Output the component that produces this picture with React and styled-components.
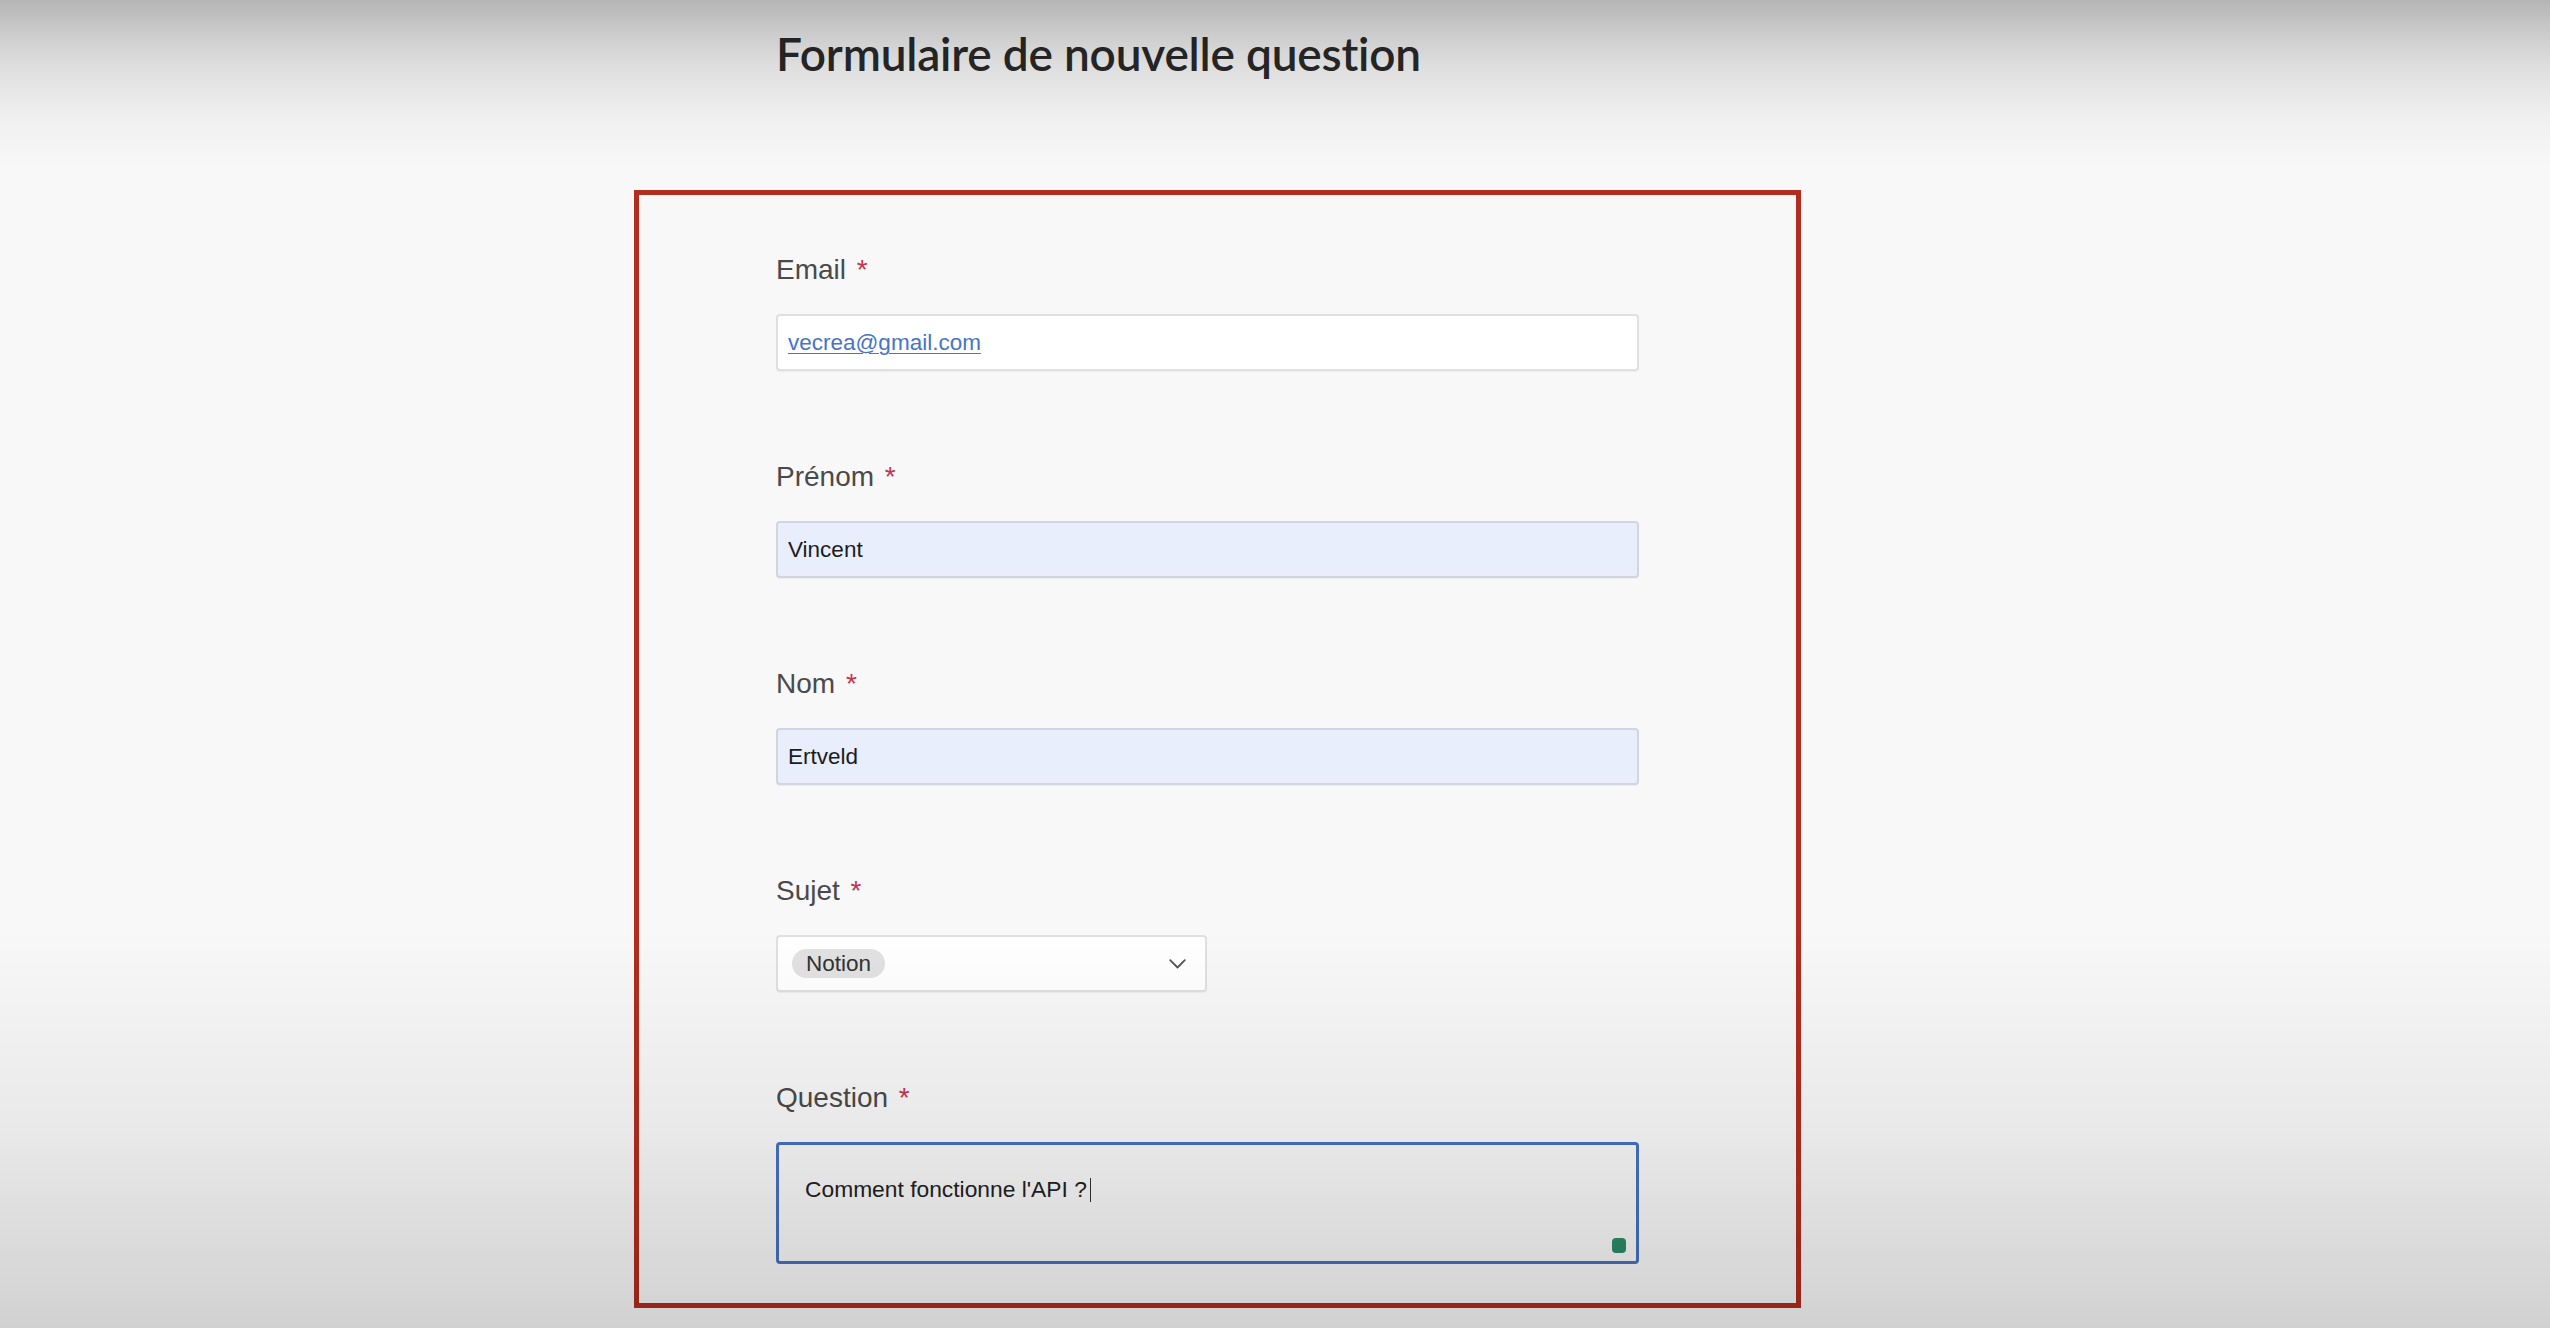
import React from "react";
import styled, { createGlobalStyle } from "styled-components";

const GlobalStyle = createGlobalStyle`
  html, body {
    margin: 0;
    padding: 0;
    background: #f8f8f8;
  }
  body {
    min-height: 100vh;
    font-family: "Liberation Sans", Arial, sans-serif;
  }
`;

const Page = styled.div`
  min-height: 100vh;
  display: flex;
  flex-direction: column;
  padding: 26px 0 0 634px;
  box-sizing: border-box;
`;

const Column = styled.div`
  width: 1167px;
  display: flex;
  flex-direction: column;
`;

const Title = styled.h1`
  margin: 0 0 108px 142px;
  font-family: "Lato", "Liberation Sans", sans-serif;
  font-weight: 600;
  font-size: 46px;
  line-height: 56px;
  color: #2a2a2a;
  letter-spacing: -0.2px;
`;

const FormBox = styled.form`
  border: 5px solid #b22d1d;
  padding: 59px 0 39px 137px;
  display: flex;
  flex-direction: column;
  gap: 90px;
  background: #f8f8f8;
`;

const Field = styled.div`
  display: flex;
  flex-direction: column;
  gap: 28px;
`;

const Label = styled.label`
  font-size: 28px;
  line-height: 32px;
  color: #4a4a4a;
`;

const Required = styled.span`
  color: #c53350;
  margin-left: 3px;
`;

const Box = styled.div`
  box-sizing: border-box;
  width: ${(p) => p.$width || 863}px;
  height: 57px;
  display: flex;
  align-items: center;
  padding: 0 10px;
  border: 2px solid ${(p) => (p.$autofill ? "#d2d5de" : "#e0e0e0")};
  border-radius: 4px;
  background: ${(p) => (p.$autofill ? "#e8eefb" : "#ffffff")};
  box-shadow: 0 1px 1px rgba(0, 0, 0, 0.05);
  font-size: 22.5px;
  color: #1c1c1c;
`;

const EmailLink = styled.span`
  color: #4874c6;
  text-decoration: underline;
  text-decoration-thickness: 1px;
  text-underline-offset: 3px;
`;

const SelectBox = styled(Box)`
  padding: 0 19px 0 14px;
  justify-content: space-between;
`;

const Pill = styled.span`
  display: inline-flex;
  align-items: center;
  height: 29px;
  padding: 0 14px;
  border-radius: 15px;
  background: #e2e2e2;
  color: #333;
  font-size: 22.5px;
`;

const TextArea = styled.div`
  position: relative;
  box-sizing: border-box;
  width: 863px;
  height: 122px;
  border: 3px solid #4572c2;
  border-radius: 4px;
  padding: 31px 26px;
  font-size: 22.8px;
  line-height: 26px;
  color: #222;
  background: transparent;
`;

const Caret = styled.span`
  display: inline-block;
  width: 1.5px;
  height: 24px;
  margin-left: 3px;
  vertical-align: -5px;
  background: #333;
`;

const GrammarDot = styled.span`
  position: absolute;
  right: 10px;
  bottom: 8px;
  width: 14px;
  height: 15px;
  border-radius: 4px;
  background: #2c8a66;
`;

const Vignette = styled.div`
  position: fixed;
  inset: 0;
  pointer-events: none;
  background: linear-gradient(
    to bottom,
    rgba(0, 0, 0, 0.27) 0px,
    rgba(0, 0, 0, 0.2) 25px,
    rgba(0, 0, 0, 0.1) 65px,
    rgba(0, 0, 0, 0.03) 120px,
    rgba(0, 0, 0, 0) 170px,
    rgba(0, 0, 0, 0) 930px,
    rgba(0, 0, 0, 0.06) 1130px,
    rgba(0, 0, 0, 0.155) 1328px
  );
`;

const Chevron = () => (
  <svg width="17" height="10" viewBox="0 0 17 10" fill="none">
    <path d="M1.2 1.2 L8.5 8.5 L15.8 1.2" stroke="#555" strokeWidth="1.8" strokeLinecap="round" strokeLinejoin="round" />
  </svg>
);

const LabelText = ({ children }) => (
  <Label>
    {children} <Required>*</Required>
  </Label>
);

export default function App() {
  return (
    <>
      <GlobalStyle />
      <Page>
        <Column>
          <Title>Formulaire de nouvelle question</Title>
          <FormBox>
            <Field>
              <LabelText>Email</LabelText>
              <Box>
                <EmailLink>vecrea@gmail.com</EmailLink>
              </Box>
            </Field>
            <Field>
              <LabelText>Prénom</LabelText>
              <Box $autofill>Vincent</Box>
            </Field>
            <Field>
              <LabelText>Nom</LabelText>
              <Box $autofill>Ertveld</Box>
            </Field>
            <Field>
              <LabelText>Sujet</LabelText>
              <SelectBox $width={431}>
                <Pill>Notion</Pill>
                <Chevron />
              </SelectBox>
            </Field>
            <Field>
              <LabelText>Question</LabelText>
              <TextArea>
                Comment fonctionne l'API ?<Caret />
                <GrammarDot />
              </TextArea>
            </Field>
          </FormBox>
        </Column>
      </Page>
      <Vignette />
    </>
  );
}
